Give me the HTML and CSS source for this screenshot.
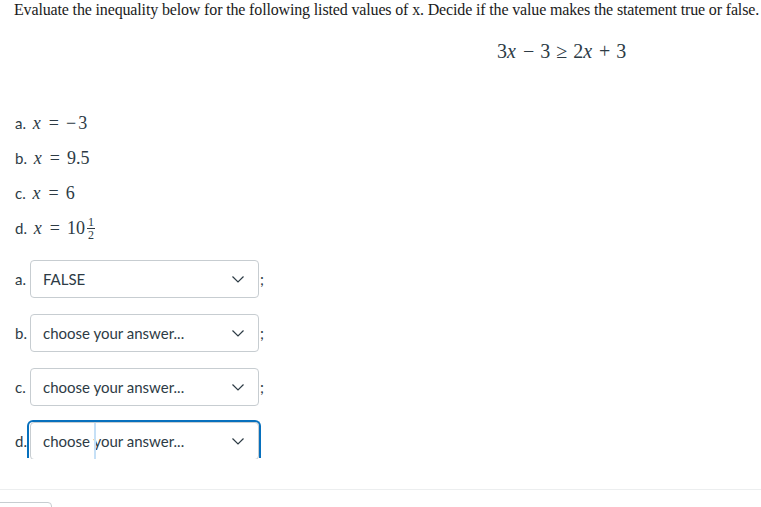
FILE: index.html
```html
<!DOCTYPE html>
<html lang="en">
<head>
<meta charset="utf-8">
<title>Inequality question</title>
<link rel="stylesheet" href="styles.css">
</head>
<body>
<div class="question">
  <p class="prompt">Evaluate the inequality below for the following listed values of x. Decide if the value makes the statement true or false.</p>
  <div class="equation"><span class="math big">3<i>x</i><span class="op">−</span>3<span class="op">≥</span>2<i>x</i><span class="op">+</span>3</span></div>
  <ul class="values">
    <li>a. <span class="math"><i>x</i><span class="op">=</span><span class="neg">−</span>3</span></li>
    <li>b. <span class="math"><i>x</i><span class="op">=</span>9.5</span></li>
    <li>c. <span class="math"><i>x</i><span class="op">=</span>6</span></li>
    <li>d. <span class="math"><i>x</i><span class="op">=</span>10<span class="frac"><span class="num">1</span><span class="den">2</span></span></span></li>
  </ul>
  <div class="answers">
    <div class="answer"><span class="label">a.</span><div class="select"><span class="value">FALSE</span><svg class="chev" viewBox="0 0 12 7" width="12" height="7"><polyline points="0.5,0.5 6,6 11.5,0.5"/></svg></div><span class="semi">;</span></div>
    <div class="answer"><span class="label">b.</span><div class="select"><span class="value">choose your answer...</span><svg class="chev" viewBox="0 0 12 7" width="12" height="7"><polyline points="0.5,0.5 6,6 11.5,0.5"/></svg></div><span class="semi">;</span></div>
    <div class="answer"><span class="label">c.</span><div class="select"><span class="value">choose your answer...</span><svg class="chev" viewBox="0 0 12 7" width="12" height="7"><polyline points="0.5,0.5 6,6 11.5,0.5"/></svg></div><span class="semi">;</span></div>
    <div class="answer"><span class="label">d.</span><div class="select focused"><span class="value">choose your answer...</span><span class="caret"></span><svg class="chev" viewBox="0 0 12 7" width="12" height="7"><polyline points="0.5,0.5 6,6 11.5,0.5"/></svg></div></div>
  </div>
</div>
<div class="footer">
  <button class="btn" type="button"></button>
</div>
</body>
</html>
```
FILE: styles.css
```css
html, body {
  margin: 0;
  padding: 0;
  background: #fff;
}
body {
  overflow: hidden;
}
.question {
  padding: 0 0 0 14px;
  height: 459px;
  overflow: hidden;
}
.prompt {
  margin: 0;
  font-family: "Liberation Serif", serif;
  font-size: 16px;
  letter-spacing: -0.15px;
  line-height: 20px;
  color: #1a1a1a;
  white-space: nowrap;
}
.math {
  font-family: "Liberation Serif", "DejaVu Serif", serif;
  color: #2d3b45;
  font-size: 18px;
}
.math i {
  font-style: italic;
  padding-right: 1px;
}
.math .op {
  padding: 0 7px;
}
.math .neg {
  padding-right: 2px;
}
.values .math {
  margin-left: 3px;
}
.equation {
  padding: 20px 0 0 483px;
  height: 30px;
}
.math.big {
  font-size: 20px;
}
.math.big .op {
  padding: 0 6px;
}
.values {
  list-style: none;
  margin: 0;
  padding: 36px 0 0 1px;
  font-family: Lato, sans-serif;
  font-size: 15px;
  color: #2d3b45;
}
.values li {
  height: 35px;
  line-height: 35px;
}
.frac {
  display: inline-flex;
  flex-direction: column;
  align-items: center;
  vertical-align: 8px;
  font-size: 12px;
  line-height: 10px;
  margin-left: 2px;
}
.frac .num {
  border-bottom: 1px solid #2d3b45;
  padding: 0 1px 1px;
}
.frac .den {
  padding: 1px 1px 0;
}
.answers {
  padding-top: 14px;
  display: flex;
  flex-direction: column;
  gap: 16px;
}
.answer {
  display: flex;
  align-items: center;
  font-family: Lato, sans-serif;
  font-size: 15px;
  color: #2d3b45;
}
.label {
  width: 15px;
  padding-left: 1px;
}
.select {
  position: relative;
  box-sizing: border-box;
  width: 229px;
  height: 38px;
  display: flex;
  align-items: center;
  justify-content: space-between;
  padding: 0 14px 0 12px;
  border: 1px solid #c7cdd1;
  border-radius: 4px;
  background: #fff;
  font-size: 15px;
  color: #2d3b45;
}
.chev {
  fill: none;
  stroke: #2d3b45;
  stroke-width: 1.2;
}
.semi {
  padding-left: 1px;
}
.select.focused::before {
  content: "";
  position: absolute;
  top: -3px;
  left: -4px;
  right: -3px;
  bottom: 1px;
  border: 2px solid #0770bd;
  border-bottom: none;
  border-radius: 6px 6px 0 0;
}
.caret {
  position: absolute;
  left: 63px;
  top: 0;
  bottom: 0;
  width: 2px;
  background: #c6e0f6;
}
.footer {
  border-top: 1px solid #eceeef;
  margin-top: 30px;
  height: 30px;
  overflow: hidden;
}
.btn {
  display: block;
  margin: 12px 0 0 -10px;
  width: 62px;
  height: 36px;
  border: 1px solid #c7cdd1;
  border-radius: 4px;
  background: #fff;
}
```
